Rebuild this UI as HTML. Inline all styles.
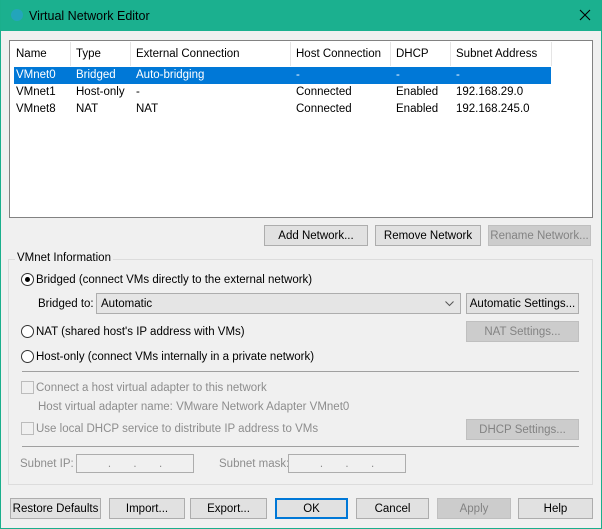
<!DOCTYPE html>
<html><head><style>
*{box-sizing:border-box;margin:0;padding:0}
body{width:602px;height:529px;background:#f0f0f0;font-family:"Liberation Sans",sans-serif;font-size:11.5px;color:#000;position:relative;overflow:hidden}
.a{position:absolute;white-space:nowrap}
.t{position:absolute;white-space:nowrap;transform:translateY(1px)}
.win{position:absolute;left:0;top:0;width:602px;height:529px;border:1px solid #1aaf8c;border-top:none}
.title{position:absolute;left:0;top:0;width:602px;height:31px;background:#1bb08f;color:#000;font-size:12.5px}
.btn{position:absolute;height:21px;background:#e1e1e1;border:1px solid #adadad;text-align:center;line-height:20px}
.dis{background:#cccccc;border-color:#bfbfbf;color:#838383}
.gray{color:#8d8d8d}
.rad{position:absolute;width:13px;height:13px;border:1px solid #333;border-radius:50%;background:#fff}
.chk{position:absolute;width:13px;height:13px;border:1px solid #bcbcbc;background:#f0f0f0}
.hl{position:absolute;height:1px;background:#a0a0a0}
.sep{position:absolute;top:42px;width:1px;height:24px;background:#e5e5e5}
</style></head><body>
<div class="title">
 <div class="a" style="left:11px;top:9px;width:12px;height:12px;border-radius:50%;background:#2a9fd8;opacity:.6"></div>
 <div class="a" style="left:29px;top:9px">Virtual Network Editor</div>
 <svg class="a" style="left:579px;top:9px" width="12" height="12"><path d="M1 1L11 11M11 1L1 11" stroke="#000" stroke-width="1.1"/></svg>
</div>
<div class="win"></div>
<div class="a" style="left:9px;top:40px;width:584px;height:178px;background:#fff;border:1px solid #828282"></div>
<div class="sep" style="left:70px"></div><div class="sep" style="left:130px"></div><div class="sep" style="left:290px"></div><div class="sep" style="left:390px"></div><div class="sep" style="left:450px"></div><div class="sep" style="left:551px"></div>
<div class="a" style="left:16px;top:48px">Name</div><div class="a" style="left:76px;top:48px">Type</div><div class="a" style="left:136px;top:48px">External Connection</div><div class="a" style="left:296px;top:48px">Host Connection</div><div class="a" style="left:396px;top:48px">DHCP</div><div class="a" style="left:456px;top:48px">Subnet Address</div>
<div class="a" style="left:14px;top:67px;width:537px;height:17px;background:#0078d7"></div>
<div class="a" style="left:16px;top:69px;color:#fff">VMnet0</div><div class="a" style="left:76px;top:69px;color:#fff">Bridged</div><div class="a" style="left:136px;top:69px;color:#fff">Auto-bridging</div><div class="a" style="left:296px;top:69px;color:#fff">-</div><div class="a" style="left:396px;top:69px;color:#fff">-</div><div class="a" style="left:456px;top:69px;color:#fff">-</div>
<div class="a" style="left:16px;top:86px">VMnet1</div><div class="a" style="left:76px;top:86px">Host-only</div><div class="a" style="left:136px;top:86px">-</div><div class="a" style="left:296px;top:86px">Connected</div><div class="a" style="left:396px;top:86px">Enabled</div><div class="a" style="left:456px;top:86px">192.168.29.0</div>
<div class="a" style="left:16px;top:103px">VMnet8</div><div class="a" style="left:76px;top:103px">NAT</div><div class="a" style="left:136px;top:103px">NAT</div><div class="a" style="left:296px;top:103px">Connected</div><div class="a" style="left:396px;top:103px">Enabled</div><div class="a" style="left:456px;top:103px">192.168.245.0</div>

<div class="btn" style="left:264px;top:225px;width:104px">Add Network...</div>
<div class="btn" style="left:375px;top:225px;width:106px">Remove Network</div>
<div class="btn dis" style="left:488px;top:225px;width:103px">Rename Network...</div>

<div class="a" style="left:8px;top:259px;width:585px;height:226px;border:1px solid #dcdcdc"></div>
<div class="a" style="left:15px;top:252px;background:#f0f0f0;padding:0 2px">VMnet Information</div>

<div class="rad" style="left:21px;top:273px"></div><div class="a" style="left:25px;top:277px;width:5px;height:5px;border-radius:50%;background:#000"></div>
<div class="a" style="left:36px;top:274px">Bridged (connect VMs directly to the external network)</div>
<div class="a" style="left:38px;top:298px">Bridged to:</div>
<div class="a" style="left:96px;top:293px;width:365px;height:21px;background:#e5e5e5;border:1px solid #adadad;padding:4px 4px">Automatic<svg style="position:absolute;right:6px;top:7px" width="9" height="6"><path d="M0.5 0.5L4.5 4.5L8.5 0.5" fill="none" stroke="#555"/></svg></div>
<div class="btn" style="left:466px;top:293px;width:113px">Automatic Settings...</div>
<div class="rad" style="left:21px;top:325px"></div><div class="a" style="left:36px;top:326px">NAT (shared host's IP address with VMs)</div>
<div class="btn dis" style="left:466px;top:321px;width:113px">NAT Settings...</div>
<div class="rad" style="left:21px;top:350px"></div><div class="a" style="left:36px;top:351px">Host-only (connect VMs internally in a private network)</div>
<div class="hl" style="left:22px;top:371px;width:557px"></div>
<div class="chk" style="left:21px;top:381px"></div><div class="a gray" style="left:36px;top:382px">Connect a host virtual adapter to this network</div>
<div class="a gray" style="left:38px;top:401px">Host virtual adapter name: VMware Network Adapter VMnet0</div>
<div class="chk" style="left:21px;top:422px"></div><div class="a gray" style="left:36px;top:423px">Use local DHCP service to distribute IP address to VMs</div>
<div class="btn dis" style="left:466px;top:419px;width:113px">DHCP Settings...</div>
<div class="hl" style="left:22px;top:446px;width:557px"></div>
<div class="a gray" style="left:20px;top:458px">Subnet IP:</div>
<div class="a gray" style="left:76px;top:454px;width:118px;height:19px;border:1px solid #adadad;text-align:center;line-height:18px">.&nbsp;&nbsp;&nbsp;&nbsp;&nbsp;&nbsp;&nbsp;.&nbsp;&nbsp;&nbsp;&nbsp;&nbsp;&nbsp;&nbsp;.</div>
<div class="a gray" style="left:219px;top:458px">Subnet mask:</div>
<div class="a gray" style="left:288px;top:454px;width:118px;height:19px;border:1px solid #adadad;text-align:center;line-height:18px">.&nbsp;&nbsp;&nbsp;&nbsp;&nbsp;&nbsp;&nbsp;.&nbsp;&nbsp;&nbsp;&nbsp;&nbsp;&nbsp;&nbsp;.</div>

<div class="btn" style="left:10px;top:498px;width:91px">Restore Defaults</div>
<div class="btn" style="left:109px;top:498px;width:76px">Import...</div>
<div class="btn" style="left:190px;top:498px;width:77px">Export...</div>
<div class="btn" style="left:275px;top:498px;width:73px;border:2px solid #0078d7;line-height:18px">OK</div>
<div class="btn" style="left:356px;top:498px;width:73px">Cancel</div>
<div class="btn dis" style="left:437px;top:498px;width:74px">Apply</div>
<div class="btn" style="left:518px;top:498px;width:75px">Help</div>
</body></html>
